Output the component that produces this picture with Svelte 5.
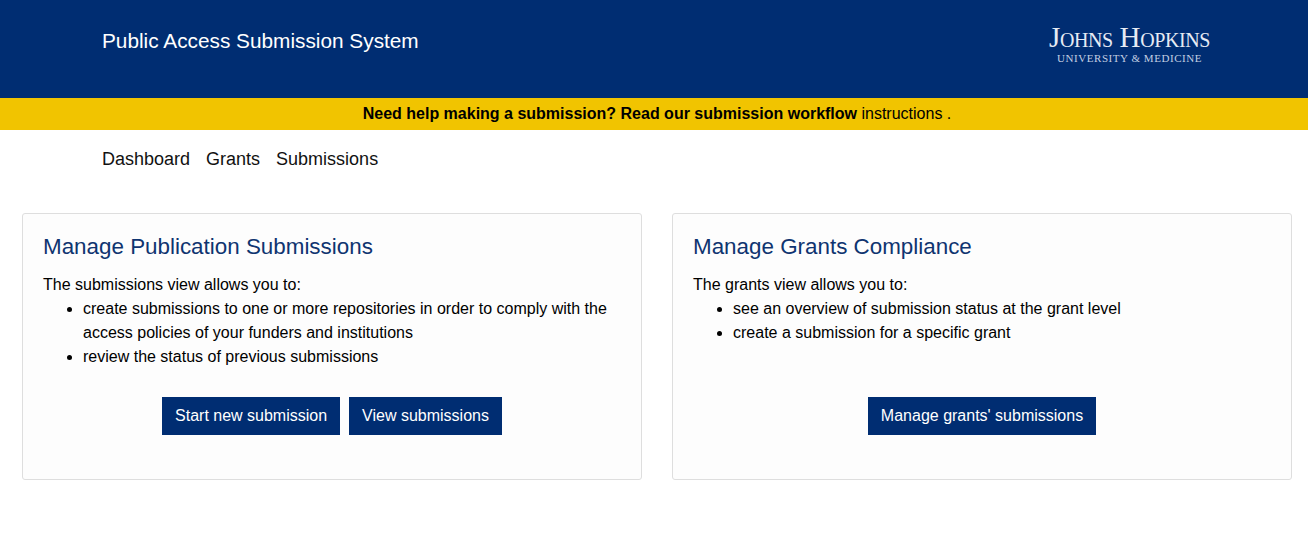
<script lang="ts">
  const navLinks = ['Dashboard', 'Grants', 'Submissions'];

  const cards = [
    {
      title: 'Manage Publication Submissions',
      intro: 'The submissions view allows you to:',
      items: [
        'create submissions to one or more repositories in order to comply with the access policies of your funders and institutions',
        'review the status of previous submissions'
      ],
      actions: ['Start new submission', 'View submissions']
    },
    {
      title: 'Manage Grants Compliance',
      intro: 'The grants view allows you to:',
      items: [
        'see an overview of submission status at the grant level',
        'create a submission for a specific grant'
      ],
      actions: ["Manage grants' submissions"]
    }
  ];
</script>

<header class="site-header">
  <span class="app-name">Public Access Submission System</span>
  <div class="logo">
    <span class="logo-top">Johns Hopkins</span>
    <span class="logo-sub">University &amp; Medicine</span>
  </div>
</header>

<div class="banner">
  <strong>Need help making a submission? Read our submission workflow</strong>
  <a href="#instructions">instructions</a> .
</div>

<nav class="main-nav">
  {#each navLinks as link}
    <a href="#{link.toLowerCase()}">{link}</a>
  {/each}
</nav>

<main class="cards">
  {#each cards as card}
    <section class="card">
      <h2>{card.title}</h2>
      <p>{card.intro}</p>
      <ul>
        {#each card.items as item}
          <li>{item}</li>
        {/each}
      </ul>
      <div class="actions">
        {#each card.actions as action}
          <button type="button">{action}</button>
        {/each}
      </div>
    </section>
  {/each}
</main>

<style>
  :global(body) {
    background: #fff;
    color: #000;
    font-family: "Liberation Sans", Arial, sans-serif;
    font-size: 16px;
    line-height: 24px;
  }

  .site-header {
    display: flex;
    justify-content: space-between;
    height: 98px;
    box-sizing: border-box;
    padding: 26px 98px 0 102px;
    background: #002d72;
    color: #fff;
  }

  .app-name {
    font-size: 20.8px;
    line-height: 30px;
  }

  .logo {
    display: flex;
    flex-direction: column;
    align-items: center;
    margin-top: -2px;
    font-family: "Liberation Serif", serif;
    color: #e6ebf4;
  }

  .logo-top {
    font-size: 29px;
    line-height: 26px;
    letter-spacing: -0.4px;
    font-variant: small-caps;
  }

  .logo-sub {
    margin-top: 1px;
    font-size: 11px;
    line-height: 14px;
    letter-spacing: 0.55px;
    text-transform: uppercase;
    color: #c3cfe2;
  }

  .banner {
    height: 32px;
    box-sizing: border-box;
    padding-left: 6px;
    background: #f1c400;
    text-align: center;
    line-height: 31px;
  }

  .banner a {
    color: #000;
    text-decoration: none;
  }

  .main-nav {
    display: flex;
    gap: 16px;
    padding: 16px 102px 0;
    height: 67px;
    box-sizing: border-box;
    font-size: 18px;
    line-height: 27px;
  }

  .main-nav a {
    color: #111;
    text-decoration: none;
  }

  .cards {
    display: grid;
    grid-template-columns: 620px 620px;
    gap: 30px;
    padding: 16px 16px 0 22px;
  }

  .card {
    height: 267px;
    box-sizing: border-box;
    padding: 20px;
    background: #fdfdfd;
    border: 1px solid #dedede;
    border-radius: 3px;
  }

  h2 {
    margin: 0 0 13px;
    font-size: 22.4px;
    font-weight: 400;
    line-height: 26px;
    color: #0f3470;
  }

  p {
    margin: 0;
  }

  ul {
    margin: 0;
    height: 72px;
    padding-left: 40px;
  }

  .actions {
    display: flex;
    justify-content: center;
    gap: 9px;
    margin-top: 28px;
  }

  button {
    height: 38px;
    padding: 0 13px;
    border: 0;
    border-radius: 0;
    background: #002d72;
    color: #fff;
    font: inherit;
    cursor: pointer;
  }
</style>
